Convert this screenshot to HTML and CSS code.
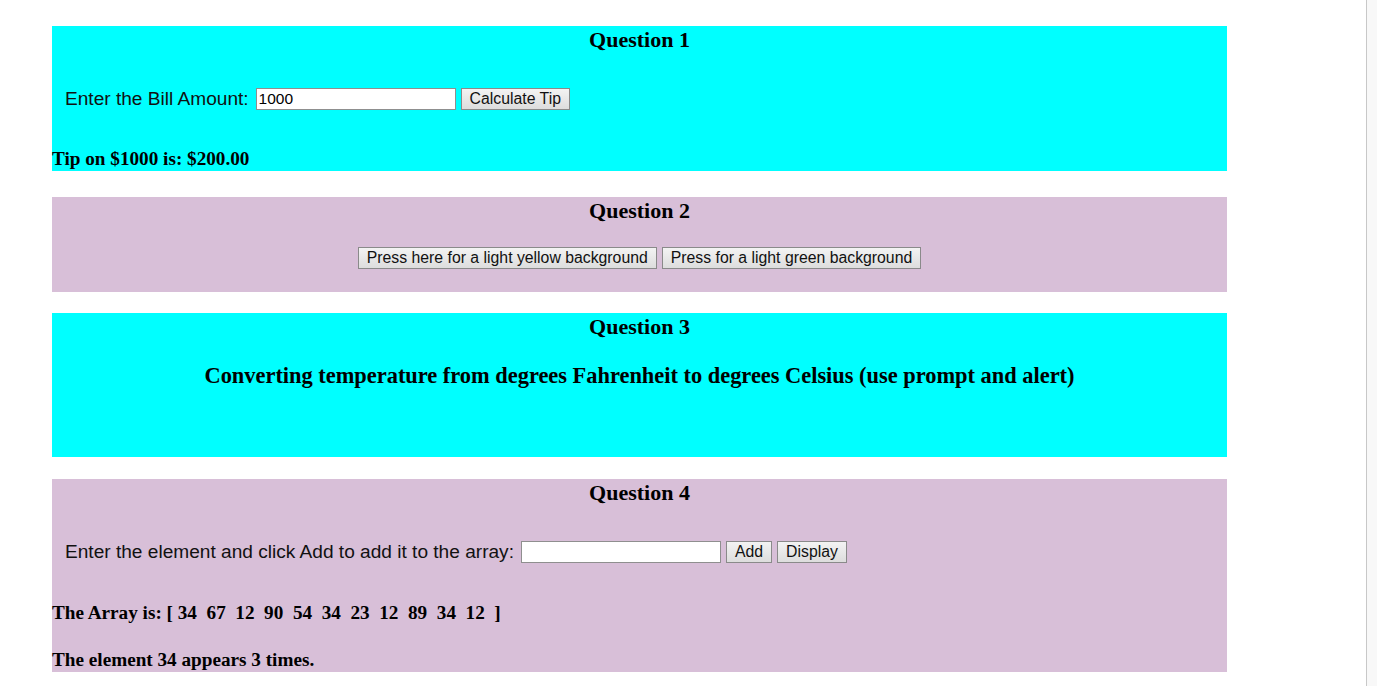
FILE: index.html
```html
<!DOCTYPE html>
<html>
<head>
<meta charset="utf-8">
<title>Questions</title>
<link rel="stylesheet" href="styles.css">
</head>
<body>
<div class="page">
  <section class="box cyan q1">
    <h3 class="title">Question 1</h3>
    <div class="row r1">
      <label class="lbl">Enter the Bill Amount:</label>
      <input class="field" type="text" value="1000">
      <button class="btn">Calculate Tip</button>
    </div>
    <p class="result tip">Tip on $1000 is: $200.00</p>
  </section>

  <section class="box thistle q2">
    <h3 class="title">Question 2</h3>
    <div class="center-row">
      <button class="btn">Press here for a light yellow background</button>
      <button class="btn">Press for a light green background</button>
    </div>
  </section>

  <section class="box cyan q3">
    <h3 class="title">Question 3</h3>
    <h3 class="subtitle">Converting temperature from degrees Fahrenheit to degrees Celsius (use prompt and alert)</h3>
  </section>

  <section class="box thistle q4">
    <h3 class="title">Question 4</h3>
    <div class="row r4">
      <label class="lbl">Enter the element and click Add to add it to the array:</label>
      <input class="field" type="text" value="">
      <button class="btn">Add</button>
      <button class="btn">Display</button>
    </div>
    <p class="result arr">The Array is: [&nbsp;34 &nbsp;67 &nbsp;12 &nbsp;90 &nbsp;54 &nbsp;34 &nbsp;23 &nbsp;12 &nbsp;89 &nbsp;34 &nbsp;12 &nbsp;]</p>
    <p class="result count">The element 34 appears 3 times.</p>
  </section>
</div>
<div class="scrollbar"></div>
</body>
</html>
```

FILE: styles.css
```css
html, body {
  margin: 0;
  padding: 0;
  background: #ffffff;
}

body {
  font-family: "Liberation Serif", "Times New Roman", serif;
  color: #000;
  overflow: hidden;
}

.page {
  width: 1175px;
  margin-left: 52px;
  padding-top: 26px;
  display: flex;
  flex-direction: column;
}

.box {
  display: flex;
  flex-direction: column;
}

.cyan { background: #00ffff; }
.thistle { background: #d8bfd8; }

.q2 { margin-top: 26px; padding-bottom: 23px; }
.q3 { margin-top: 21px; padding-bottom: 67px; }
.q4 { margin-top: 22px; }

.title,
.subtitle {
  margin: 0;
  font-size: 22px;
  line-height: 28px;
  font-weight: bold;
  text-align: center;
}

.subtitle {
  margin-top: 21px;
  font-size: 22.4px;
}

.row {
  display: flex;
  align-items: center;
  height: 24px;
  padding-left: 13px;
  margin-top: 33px;
}

.lbl {
  font-family: "Liberation Sans", Arial, sans-serif;
  font-size: 19.1px;
  color: #111;
  margin-right: 7px;
  white-space: nowrap;
}

.field {
  box-sizing: border-box;
  width: 200px;
  height: 22px;
  margin: 0 5px 0 0;
  padding: 0 2px;
  border: 1px solid #8f8f8f;
  background: #fff;
  font-family: "Liberation Sans", Arial, sans-serif;
  font-size: 15.5px;
  color: #000;
  outline: none;
}

.btn {
  box-sizing: border-box;
  height: 22px;
  margin: 0 5px 0 0;
  padding: 0 8px;
  border: 1px solid #8a8a8a;
  border-radius: 0;
  background: linear-gradient(#f3f3f3, #dddddd);
  font-family: "Liberation Sans", Arial, sans-serif;
  font-size: 15.8px;
  line-height: 20px;
  color: #111;
  white-space: nowrap;
}

.center-row {
  display: flex;
  justify-content: center;
  margin-top: 22px;
  padding-left: 5px;
}

.result {
  margin: 0;
  font-size: 19.2px;
  line-height: 24px;
  font-weight: bold;
  white-space: nowrap;
}

.tip { margin-top: 36px; }
.arr { margin-top: 37px; }
.count { margin-top: 23px; }

.scrollbar {
  position: fixed;
  top: 0;
  right: 0;
  width: 10px;
  height: 100%;
  background: #f8f8f8;
  border-left: 1px solid #c8c8c8;
}
```
